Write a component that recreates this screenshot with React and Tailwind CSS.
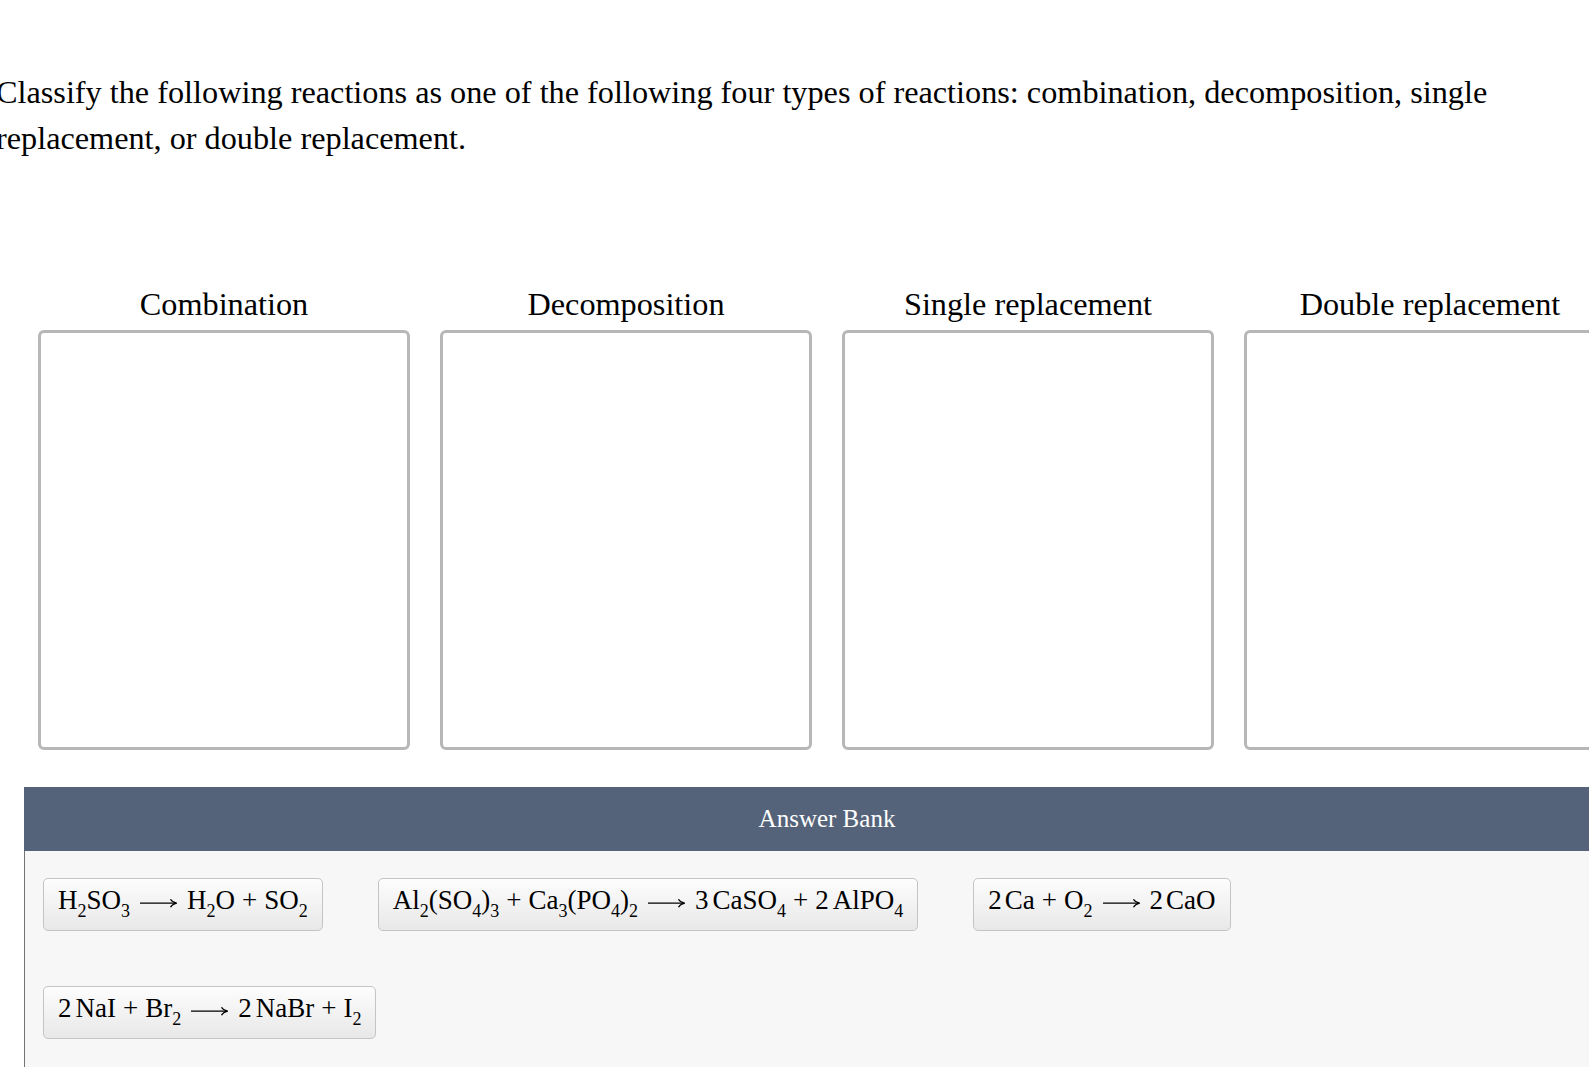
import React from 'react';

const categories = ['Combination', 'Decomposition', 'Single replacement', 'Double replacement'];

const Sub = ({ children }) => (
  <span className="relative top-[8px] text-[18px] leading-none">{children}</span>
);

// long reaction arrow, like the math renderer draws it
const Arrow = () => (
  <svg className="mx-[10px] inline-block align-middle" width="37" height="12" viewBox="0 0 37 12">
    <path d="M0 6.2H35.5" stroke="#000" strokeWidth="1.3" fill="none" />
    <path d="M30.5 2.2Q32 5 36.5 6.2Q32 7.4 30.5 10.2" stroke="#000" strokeWidth="1.2" fill="none" />
  </svg>
);

const Plus = () => <span className="mx-[7px]">+</span>;

const Chip = ({ children }) => (
  <div className="h-[53px] rounded-[5px] border border-[#c4c4c4] bg-gradient-to-b from-[#fdfdfd] to-[#e8e8e8] px-[14px] pt-[8px] text-[27px] leading-[27px] whitespace-nowrap text-black">
    {children}
  </div>
);

const App = () => {
  return (
    <div className="h-[1067px] w-full overflow-hidden bg-white font-['Liberation_Serif','Times_New_Roman',serif] text-black">
      <div className="pt-[69px]">
        <p className="-ml-[4px] w-[1560px] text-[32.25px] leading-[46px]">
          Classify the following reactions as one of the following four types of reactions: combination, decomposition, single
          replacement, or double replacement.
        </p>

        {/* Drop zones */}
        <div className="mt-[123px] ml-[38px] flex gap-[30px]">
          {categories.map((c) => (
            <div key={c} className="w-[372px] shrink-0">
              <div className="mb-[6px] text-center text-[32.25px] leading-[40px]">{c}</div>
              <div className="h-[420px] rounded-[6px] border-[3px] border-[#b7b7b7] bg-white" />
            </div>
          ))}
        </div>

        {/* Answer Bank */}
        <div className="mt-[37px] ml-[24px] w-[1606px]">
          <div className="flex h-[64px] items-center justify-center bg-[#546379] text-[25px] text-white">
            Answer Bank
          </div>
          <div className="h-[300px] border-l border-[#737373] bg-[#f7f7f7] pt-[27px] pl-[18px] pr-[60px]">
            <div className="flex flex-wrap gap-x-[55px] gap-y-[55px]">
              <Chip>
                H<Sub>2</Sub>SO<Sub>3</Sub>
                <Arrow />
                H<Sub>2</Sub>O<Plus />SO<Sub>2</Sub>
              </Chip>
              <Chip>
                Al<Sub>2</Sub>(SO<Sub>4</Sub>)<Sub>3</Sub>
                <Plus />
                Ca<Sub>3</Sub>(PO<Sub>4</Sub>)<Sub>2</Sub>
                <Arrow />
                3<span className="ml-[4px]">CaSO</span><Sub>4</Sub>
                <Plus />
                2<span className="ml-[4px]">AlPO</span><Sub>4</Sub>
              </Chip>
              <Chip>
                2<span className="ml-[3px]">Ca</span>
                <Plus />
                O<Sub>2</Sub>
                <Arrow />
                2<span className="ml-[3px]">CaO</span>
              </Chip>
              <Chip>
                2<span className="ml-[4px]">NaI</span>
                <Plus />
                Br<Sub>2</Sub>
                <Arrow />
                2<span className="ml-[4px]">NaBr</span>
                <Plus />
                I<Sub>2</Sub>
              </Chip>
            </div>
          </div>
        </div>
      </div>
    </div>
  );
};

export default App;
